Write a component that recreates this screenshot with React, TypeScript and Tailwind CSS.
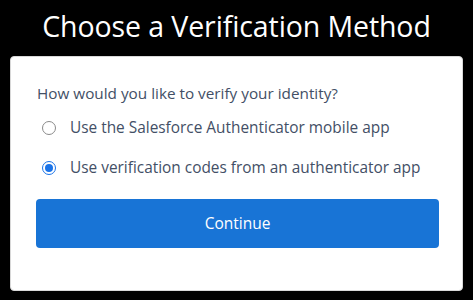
export default function App() {
  return (
    <div className="w-[473px] h-[300px] bg-black overflow-hidden" style={{ fontFamily: '"Open Sans", "Noto Sans", sans-serif' }}>
      <div className="h-[56px] flex items-center justify-center">
        <h1 className="text-[28.5px] leading-none text-white tracking-[-0.1px] pb-[3px]">Choose a Verification Method</h1>
      </div>
      <div className="ml-[10px] w-[453px] h-[235px] bg-white rounded-[4px] border border-[#d8d8d8] pt-[26px] px-[24px]">
        <p className="pl-[2px] text-[15.3px] leading-[20px] text-[#434f66]">How would you like to verify your identity?</p>
        <div className="mt-[15px] flex flex-col gap-[20px]">
          <label className="flex items-center gap-[14px] pl-[7px] h-[20px]">
            <span className="w-[14px] h-[14px] rounded-full border border-[#8a8a8a] bg-white shrink-0" />
            <span className="text-[15.4px] leading-[20px] text-[#434f66]">Use the Salesforce Authenticator mobile app</span>
          </label>
          <label className="flex items-center gap-[14px] pl-[7px] h-[20px]">
            <span className="w-[14px] h-[14px] rounded-full border-[1.5px] border-[#1a73e8] bg-white shrink-0 flex items-center justify-center">
              <span className="w-[8px] h-[8px] rounded-full bg-[#1a73e8]" />
            </span>
            <span className="text-[15.4px] leading-[20px] text-[#434f66]">Use verification codes from an authenticator app</span>
          </label>
        </div>
        <button className="mt-[21px] w-[403px] h-[49px] rounded-[4px] bg-[#1874d6] text-white text-[15.5px] ml-[1px]">Continue</button>
      </div>
    </div>
  );
}
